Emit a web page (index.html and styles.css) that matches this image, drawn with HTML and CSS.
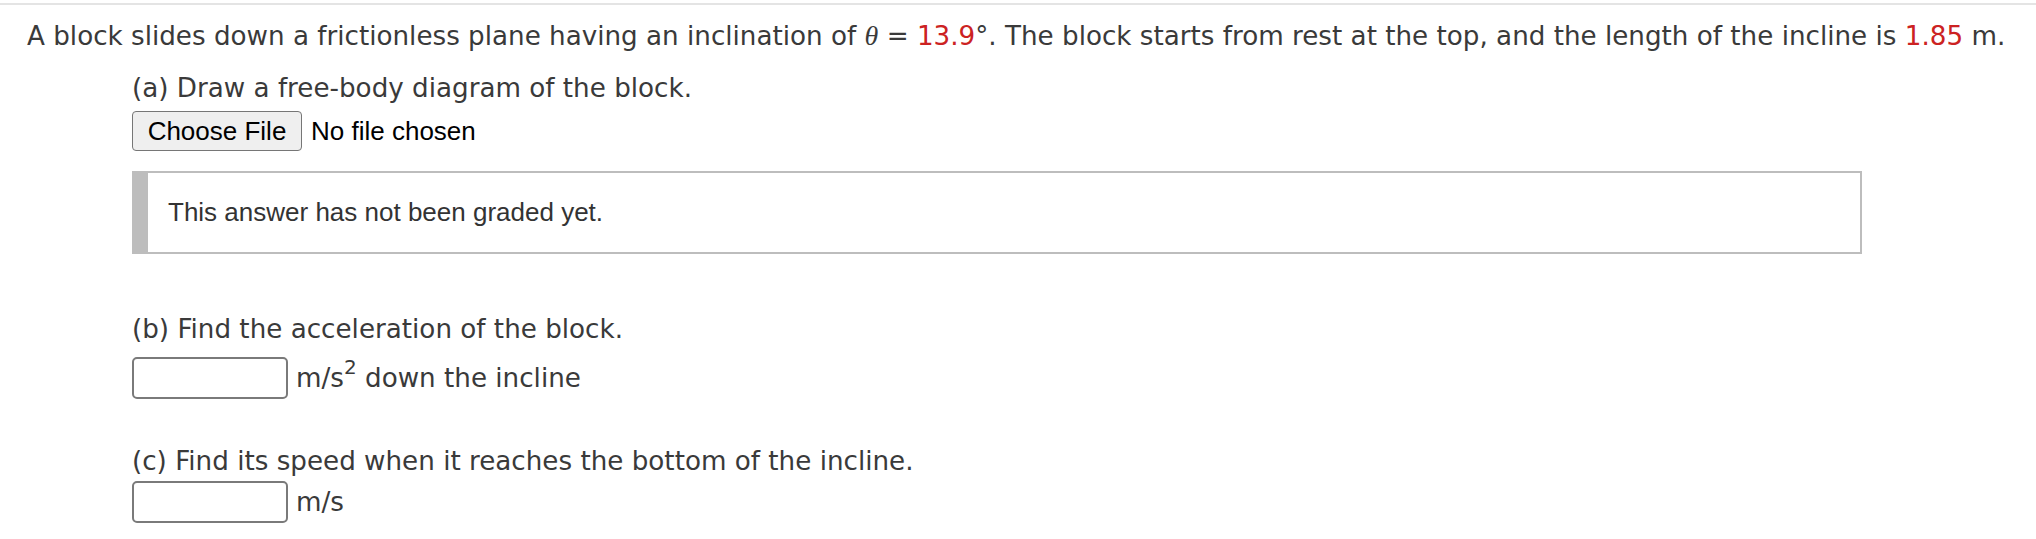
FILE: index.html
```html
<!DOCTYPE html>
<html>
<head>
<meta charset="utf-8">
<link rel="stylesheet" href="styles.css">
</head>
<body>
<div class="topline"></div>
<p class="intro">A block slides down a frictionless plane having an inclination of <span class="math">θ</span> = <span class="red">13.9</span>°. The block starts from rest at the top, and the length of the incline is <span class="red">1.85</span> m.</p>
<div class="part">
  <p class="q">(a) Draw a free-body diagram of the block.</p>
  <div class="filerow">
    <button class="filebtn" type="button">Choose File</button>
    <span class="nofile">No file chosen</span>
  </div>
  <div class="graded">This answer has not been graded yet.</div>

  <p class="q qb">(b) Find the acceleration of the block.</p>
  <div class="ansrow">
    <span class="ansbox"></span>
    <span class="unit">m/s<sup>2</sup> down the incline</span>
  </div>

  <p class="q qc">(c) Find its speed when it reaches the bottom of the incline.</p>
  <div class="ansrow ansrow-c">
    <span class="ansbox"></span>
    <span class="unit">m/s</span>
  </div>
</div>
</body>
</html>
```
FILE: styles.css
```css
html, body {
  margin: 0;
  padding: 0;
  background: #ffffff;
}
body {
  font-family: "DejaVu Sans", Verdana, sans-serif;
  color: #3a3a3a;
}
.topline {
  margin-top: 3px;
  height: 2px;
  background: #e4e4e4;
}
.intro {
  margin: 13px 0 0 0;
  padding-left: 27px;
  font-size: 26.2px;
  line-height: 36px;
  white-space: nowrap;
}
.red {
  color: #cc2222;
}
.math {
  font-family: "Liberation Serif", "Times New Roman", serif;
  font-style: italic;
  font-size: 28px;
}
.part {
  margin-left: 132px;
}
.q {
  margin: 16px 0 0 0;
  font-size: 26.2px;
  line-height: 36px;
  white-space: nowrap;
}
.filerow {
  display: flex;
  align-items: center;
  margin-top: 5px;
  height: 40px;
}
.filebtn {
  box-sizing: border-box;
  height: 40px;
  width: 170px;
  padding: 0;
  font-family: "Liberation Sans", Arial, sans-serif;
  font-size: 26px;
  color: #000;
  background: #efefef;
  border: 1px solid #767676;
  border-radius: 4px;
}
.nofile {
  margin-left: 9px;
  font-family: "Liberation Sans", Arial, sans-serif;
  font-size: 26px;
  color: #000;
}
.graded {
  box-sizing: border-box;
  margin-top: 20px;
  width: 1730px;
  height: 83px;
  border: 2px solid #bdbdbd;
  border-left: 16px solid #bdbdbd;
  display: flex;
  align-items: center;
  padding-left: 20px;
  font-family: "Liberation Sans", Arial, sans-serif;
  font-size: 26px;
  color: #333;
}
.qb {
  margin-top: 57px;
}
.qc {
  margin-top: 44px;
}
.ansrow {
  display: flex;
  align-items: center;
  margin-top: 10px;
  height: 42px;
}
.ansrow-c {
  margin-top: 2px;
}
.ansbox {
  box-sizing: border-box;
  width: 156px;
  height: 42px;
  border: 2px solid #7a7a7a;
  border-radius: 5px;
  background: #fff;
}
.unit {
  margin-left: 8px;
  font-size: 26.2px;
  line-height: 36px;
  white-space: nowrap;
}
.unit sup {
  font-size: 20px;
  line-height: 0;
  vertical-align: 13px;
}
```
